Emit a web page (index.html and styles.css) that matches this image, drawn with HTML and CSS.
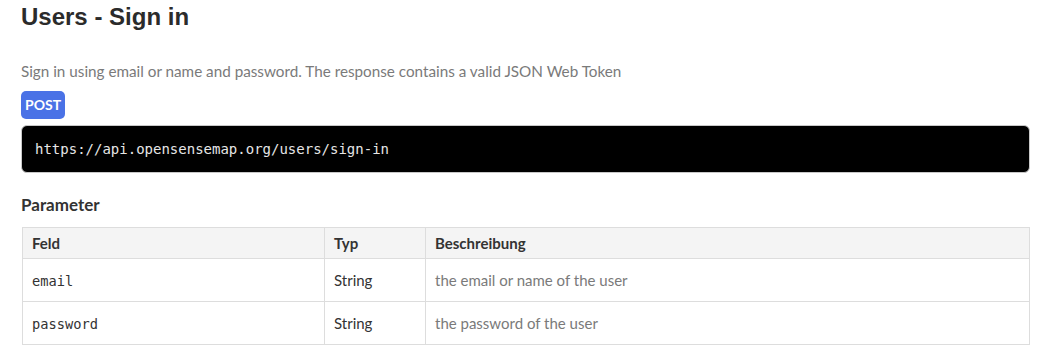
FILE: index.html
```html
<!DOCTYPE html>
<html lang="en">
<head>
    <meta charset="UTF-8">
    <title>Users - Sign in</title>
    <link rel="stylesheet" href="styles.css">
</head>
<body>
    <div class="endpoint">
        <h1 class="endpoint-title">Users - Sign in</h1>
        <p class="endpoint-desc">Sign in using email or name and password. The response contains a valid JSON Web Token</p>
        <span class="method-badge">POST</span>
        <pre class="endpoint-url"><code>https://api.opensensemap.org/users/sign-in</code></pre>

        <h2 class="section-title">Parameter</h2>
        <table class="param-table">
            <thead>
                <tr>
                    <th class="col-field">Feld</th>
                    <th class="col-type">Typ</th>
                    <th>Beschreibung</th>
                </tr>
            </thead>
            <tbody>
                <tr>
                    <td><code>email</code></td>
                    <td>String</td>
                    <td class="desc">the email or name of the user</td>
                </tr>
                <tr>
                    <td><code>password</code></td>
                    <td>String</td>
                    <td class="desc">the password of the user</td>
                </tr>
            </tbody>
        </table>
    </div>
</body>
</html>
```

FILE: styles.css
```css
:root {
    --text-color: #333333;
    --muted-color: #7a7a7a;
    --badge-blue: #4a72e6;
    --border-color: #dddddd;
    --head-bg: #f4f4f4;
}

* {
    margin: 0;
    padding: 0;
    box-sizing: border-box;
}

body {
    font-family: 'Lato', 'Noto Sans', sans-serif;
    background-color: #ffffff;
    color: var(--text-color);
}

.endpoint {
    padding: 4px 13px 0 21px;
}

.endpoint-title {
    font-family: 'Liberation Sans', Arial, sans-serif;
    font-size: 24px;
    font-weight: 700;
    line-height: 26px;
    color: #2b2b2b;
}

.endpoint-desc {
    margin-top: 31px;
    font-size: 15.25px;
    line-height: 20px;
    color: var(--muted-color);
}

.method-badge {
    display: inline-block;
    margin-top: 10px;
    padding: 0 4px;
    height: 28px;
    line-height: 28px;
    border-radius: 5px;
    background-color: var(--badge-blue);
    color: #ffffff;
    font-size: 14px;
    font-weight: 700;
}

.endpoint-url {
    margin-top: 6px;
    height: 48px;
    padding: 0 13px;
    display: flex;
    align-items: center;
    background-color: #000000;
    border: 1px solid #c8c8c8;
    border-radius: 6px;
}

.endpoint-url code {
    font-family: 'DejaVu Sans Mono', monospace;
    font-size: 14px;
    color: #e6e6e6;
}

.section-title {
    margin-top: 21px;
    font-size: 17px;
    font-weight: 700;
    line-height: 22px;
    color: #333333;
}

.param-table {
    margin-top: 11px;
    margin-left: 1px;
    width: 1008px;
    border-collapse: collapse;
    font-size: 15px;
}

.param-table th,
.param-table td {
    border: 1px solid var(--border-color);
    padding: 0 9px;
    text-align: left;
    vertical-align: middle;
}

.param-table th {
    height: 31px;
    background-color: var(--head-bg);
    font-weight: 700;
}

.param-table td {
    height: 43px;
}

.col-field {
    width: 302px;
}

.col-type {
    width: 101px;
}

.param-table code {
    font-family: 'DejaVu Sans Mono', monospace;
    font-size: 13.7px;
    color: #333333;
}

.param-table .desc {
    color: var(--muted-color);
}
```
